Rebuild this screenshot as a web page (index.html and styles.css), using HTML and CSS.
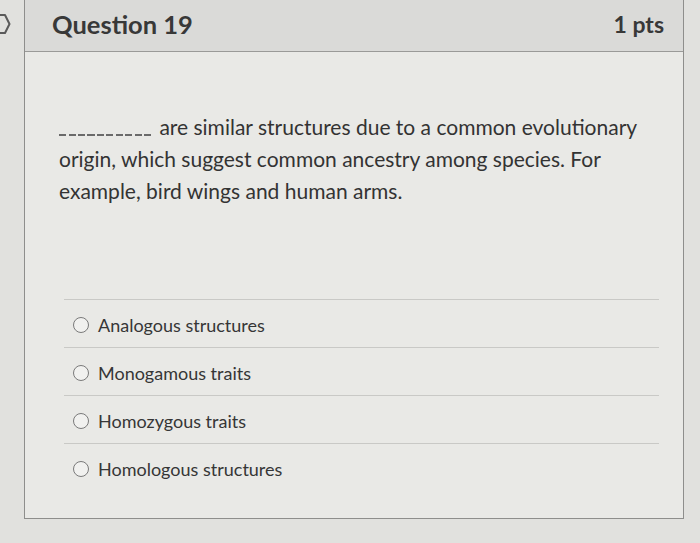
FILE: index.html
```html
<!DOCTYPE html>
<html lang="en">
<head>
<meta charset="utf-8">
<title>Question 19</title>
<link rel="stylesheet" href="styles.css">
</head>
<body>
<div class="page">
  <div class="gutter">
    <svg class="chevron" width="14" height="40" viewBox="0 0 14 40" aria-hidden="true">
      <path d="M-2 15 L5 15 L9.5 24 L5 33 L-2 33" fill="none" stroke="#5a5a5a" stroke-width="2" stroke-linejoin="round"/>
    </svg>
  </div>
  <div class="card">
    <div class="header">
      <h2 class="title">Question 19</h2>
      <span class="pts">1 pts</span>
    </div>
    <div class="content">
      <p class="question"><span class="blank"></span> are similar structures due to a common evolutionary origin, which suggest common ancestry among species. For example, bird wings and human arms.</p>
      <ul class="answers">
        <li class="answer"><span class="radio"></span><span class="label">Analogous structures</span></li>
        <li class="answer"><span class="radio"></span><span class="label">Monogamous traits</span></li>
        <li class="answer"><span class="radio"></span><span class="label">Homozygous traits</span></li>
        <li class="answer"><span class="radio"></span><span class="label">Homologous structures</span></li>
      </ul>
    </div>
  </div>
</div>
</body>
</html>
```
FILE: styles.css
```css
html, body {
  margin: 0;
  padding: 0;
}
body {
  background: #e1e1de;
  font-family: Lato, "Open Sans", "Liberation Sans", sans-serif;
  color: #383838;
  width: 700px;
  height: 543px;
  overflow: hidden;
}
.page {
  display: flex;
  align-items: flex-start;
}
.gutter {
  width: 24px;
  flex: none;
}
.chevron {
  display: block;
}
.card {
  width: 660px;
  height: 519px;
  flex: none;
  box-sizing: border-box;
  border: 1.5px solid #8e8e8c;
  border-top: none;
  background: #e9e9e6;
  display: flex;
  flex-direction: column;
}
.header {
  height: 52px;
  box-sizing: border-box;
  background: #dadad8;
  border-bottom: 1.5px solid #9a9a98;
  display: flex;
  justify-content: space-between;
  align-items: center;
  padding: 0 19px 4px 27px;
}
.title {
  margin: 0;
  font-size: 25.5px;
  font-weight: 700;
  color: #383838;
  letter-spacing: 0;
}
.pts {
  font-size: 23px;
  font-weight: 700;
  color: #383838;
}
.content {
  padding: 59px 24px 0 34px;
}
.question {
  margin: 0;
  font-size: 21px;
  line-height: 32px;
  color: #333333;
}
.blank {
  display: inline-block;
  width: 95px;
  height: 2px;
  vertical-align: baseline;
  margin-bottom: -1px;
  background: repeating-linear-gradient(90deg, #6a6a6a 0 7px, transparent 7px 9.5px);
}
.answers {
  list-style: none;
  margin: 92px 0 0 5px;
  padding: 0;
}
.answer {
  height: 48px;
  box-sizing: border-box;
  border-top: 1.5px solid #c9c9c6;
  display: flex;
  align-items: center;
  padding: 2px 0 0 9px;
  gap: 9px;
}
.radio {
  width: 14px;
  height: 14px;
  border: 1.5px solid #7a7a7a;
  border-radius: 50%;
  background: #f1f1ef;
  flex: none;
}
.label {
  font-size: 18px;
  color: #363636;
}
```
